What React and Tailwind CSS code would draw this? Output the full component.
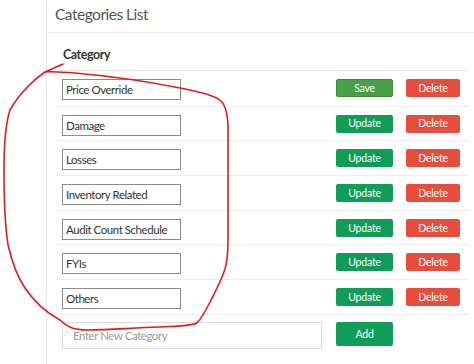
import { useState } from 'react';

const initial = [
  'Price Override',
  'Damage',
  'Losses',
  'Inventory Related',
  'Audit Count Schedule',
  'FYIs',
  'Others',
];

export default function App() {
  const [cats, setCats] = useState(initial);
  const [draft, setDraft] = useState('');

  const update = (i, v) => setCats(prev => prev.map((c, j) => (j === i ? v : c)));

  return (
    <div className="relative w-[474px] h-[364px] bg-white overflow-hidden" style={{ fontFamily: 'Lato, "Open Sans", sans-serif' }}>
      <div className="ml-[46px] h-full border-l border-[#e6e6e6]">
        {/* Title */}
        <div className="h-[33px] border-b border-[#ececec] pl-[8px] flex items-center pb-[2px]">
          <h2 className="text-[15.5px] tracking-[-0.5px] text-[#555] leading-none">Categories List</h2>
        </div>

        <div className="pl-[10px] pr-[6px]">
          {/* Header */}
          <div className="h-[38px] flex items-end pb-[9px] pl-[6px] border-b border-[#e8e8e8]">
            <span className="text-[12.5px] tracking-[-0.45px] font-bold text-[#333] leading-none">Category</span>
          </div>

          {cats.map((c, i) => (
            <div key={i} className={`h-[34.7px] flex items-start pt-[8px] pl-[5px] pr-[8px] ${i > 0 ? 'border-t border-[#ececec]' : ''}`}>
              <input
                value={c}
                onChange={e => update(i, e.target.value)}
                className="w-[119px] h-[21px] border border-[#8a8a8a] px-[3px] text-[11.5px] tracking-[-0.45px] text-[#333] outline-none"
              />
              <div className="flex-1" />
              {i === 0 ? (
                <button className="w-[57px] h-[18px] rounded-[2px] bg-[#48a044] border border-[#3a8a37] text-white text-[10.5px] tracking-[-0.2px] leading-none">Save</button>
              ) : (
                <button className="w-[57px] h-[18px] rounded-[2px] bg-[#0f9d58] text-white text-[10.5px] tracking-[-0.2px] leading-none">Update</button>
              )}
              <button className="ml-[13px] w-[54px] h-[18px] rounded-[2px] bg-[#e74c3c] text-white text-[10.5px] tracking-[-0.2px] leading-none">Delete</button>
            </div>
          ))}

          {/* New category */}
          <div className="h-[48px] flex items-start pt-[7px] pl-[5px] border-t border-[#ececec]">
            <input
              value={draft}
              onChange={e => setDraft(e.target.value)}
              placeholder="Enter New Category"
              className="w-[260px] h-[27px] border border-[#dcdcdc] px-[10px] text-[11.5px] tracking-[-0.45px] text-[#333] placeholder:text-[#9a9a9a] outline-none"
            />
            <button className="ml-[14px] w-[57px] h-[24px] rounded-[2px] bg-[#0f9d58] text-white text-[10.5px] tracking-[-0.2px] leading-none">Add</button>
          </div>
        </div>
      </div>

      {/* hand-drawn annotation */}
      <svg className="absolute left-0 top-0 pointer-events-none" width="474" height="364" viewBox="0 0 474 364">
        <path
          d="M63 64 L45 72 C36 78 20 92 10 110 C5 125 4 145 4 170 C4 200 5 225 8 245 C12 262 18 278 25 288 C33 300 45 312 60 320 C66 326 72 330 88 330 C110 330 130 328 160 327 C180 326 192 326 197 323 C202 318 205 312 210 302 C215 292 220 283 224 272 C227 264 228 255 228 240 L228 130 C228 115 226 106 221 101 C215 96 205 93 180 88 C150 82 110 76 75 73 C60 72 50 71 45 72"
          fill="none"
          stroke="#e21b1b"
          strokeWidth="1.6"
          strokeLinecap="round"
          strokeLinejoin="round"
        />
      </svg>
    </div>
  );
}
